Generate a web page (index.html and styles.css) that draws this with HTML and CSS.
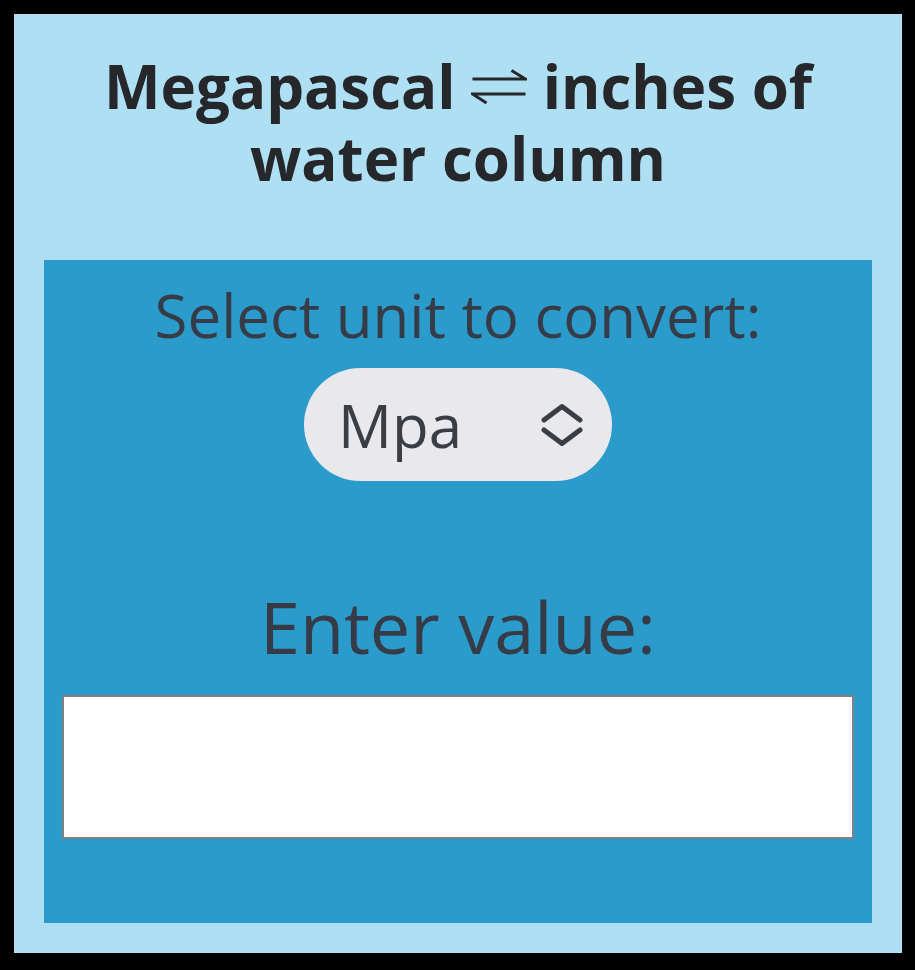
FILE: index.html
```html
<!DOCTYPE html>
<html>
<head>
<meta charset="utf-8">
<link rel="stylesheet" href="styles.css">
</head>
<body>
<div class="card">
  <h1 class="title"><span>Megapascal</span> <svg class="arrow" width="56" height="40" viewBox="0 0 56 40"><path d="M1.5 10 H54.5 L40.5 1.5 M54.5 25 H1.5 L15.5 34" fill="none" stroke="#25272b" stroke-width="3" stroke-linejoin="miter"/></svg> <span>inches of</span><br><span>water column</span></h1>
  <div class="panel">
    <label class="select-label">Select unit to convert:</label>
    <div class="select">
      <span class="select-text">Mpa</span>
      <svg class="chev" width="48" height="48" viewBox="0 0 48 48"><path d="M6 19 L24 5.5 L42 19 M6 29 L24 42.5 L42 29" fill="none" stroke="#3b3d44" stroke-width="5" stroke-linecap="round" stroke-linejoin="round"/></svg>
    </div>
    <label class="value-label">Enter value:</label>
    <div class="input"></div>
  </div>
</div>
</body>
</html>
```

FILE: styles.css
```css
html, body { margin: 0; padding: 0; }
body {
  background: #000;
  width: 915px;
  height: 970px;
  padding: 14px 13px 17px 14px;
  box-sizing: border-box;
  font-family: "Open Sans", sans-serif;
}
.card {
  background: #aedff2;
  height: 939px;
  padding: 0 30px;
  box-sizing: border-box;
  display: flex;
  flex-direction: column;
}
.title {
  margin: 0;
  padding: 36px 40px 0;
  height: 246px;
  box-sizing: border-box;
  text-align: center;
  font-size: 60px;
  line-height: 72px;
  font-weight: 700;
  color: #25272b;
}
.arrow {
  vertical-align: baseline;
}
.panel {
  background: #2a9bcb;
  height: 663px;
  display: flex;
  flex-direction: column;
  align-items: center;
  padding: 19px 18px 0;
  box-sizing: border-box;
}
.select-label {
  font-size: 60px;
  line-height: 72px;
  color: #363c47;
}
.select {
  margin-top: 17px;
  width: 308px;
  height: 113px;
  border-radius: 57px;
  background: #e9e9ed;
  display: flex;
  align-items: center;
  justify-content: space-between;
  padding: 0 26px 0 34px;
  box-sizing: border-box;
}
.select-text {
  font-size: 60px;
  color: #3b3d44;
}
.value-label {
  margin-top: 100px;
  font-size: 72px;
  line-height: 90px;
  color: #363c47;
}
.input {
  margin-top: 24px;
  align-self: stretch;
  height: 144px;
  background: #fff;
  border: 2px solid #808080;
  box-sizing: border-box;
}
```
